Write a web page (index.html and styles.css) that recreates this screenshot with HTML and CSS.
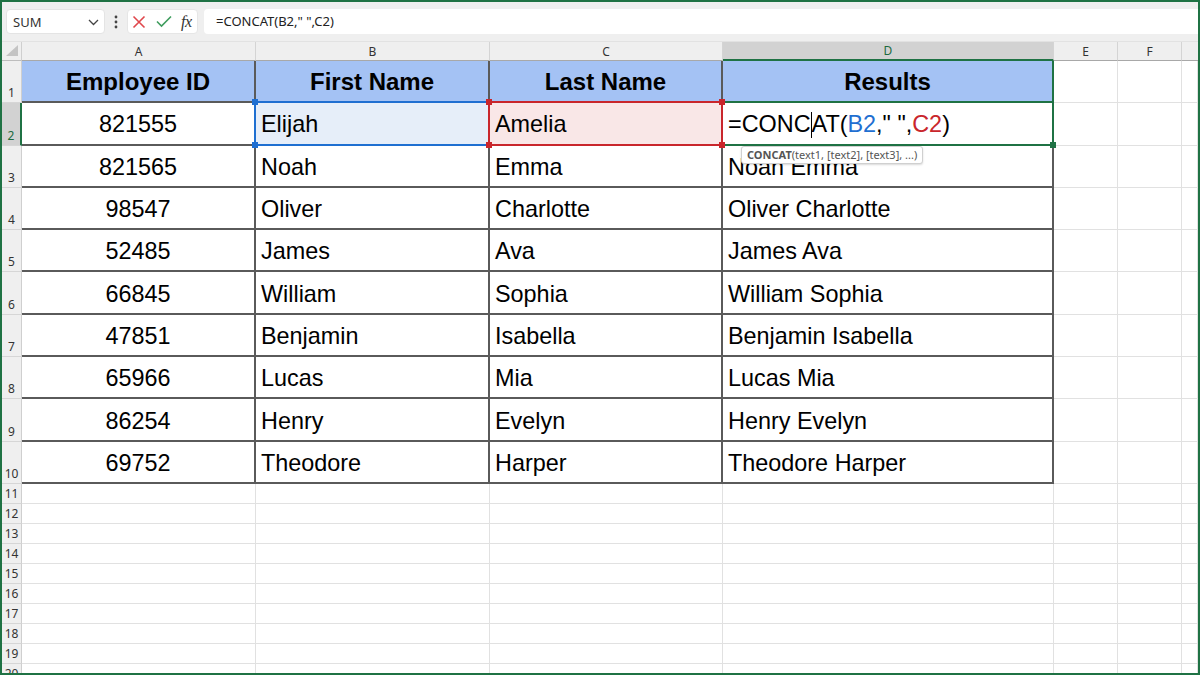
FILE: index.html
```html
<!DOCTYPE html>
<html lang="en">
<head>
<meta charset="utf-8">
<title>CONCAT</title>
<link rel="stylesheet" href="styles.css">
</head>
<body>
<div class="window">
  <div class="formula-bar">
    <div class="name-box">
      <span>SUM</span>
      <svg class="chev" width="11" height="7" viewBox="0 0 11 7"><path d="M1 1 L5.5 5.5 L10 1" fill="none" stroke="#444" stroke-width="1.3"/></svg>
    </div>
    <div class="kebab">
      <svg width="4" height="14" viewBox="0 0 4 14"><circle cx="2" cy="2" r="1.4" fill="#444"/><circle cx="2" cy="7" r="1.4" fill="#444"/><circle cx="2" cy="12" r="1.4" fill="#444"/></svg>
    </div>
    <div class="fx-box">
      <svg class="ico-x" width="14" height="14" viewBox="0 0 14 14"><path d="M1.5 1.5 L12.5 12.5 M12.5 1.5 L1.5 12.5" stroke="#e0474c" stroke-width="1.6" fill="none"/></svg>
      <svg class="ico-ok" width="16" height="13" viewBox="0 0 16 13"><path d="M1 6.5 L5.5 11 L15 1.5" stroke="#3f9d5e" stroke-width="1.6" fill="none"/></svg>
      <span class="fx">fx</span>
    </div>
    <div class="formula-input">=CONCAT(B2," ",C2)</div>
  </div>

  <div class="sheet">
    <div class="row head">
      <div class="corner"><svg width="14" height="12" viewBox="0 0 14 12"><path d="M13 0 L13 11 L1 11 Z" fill="#c4c4c4"/></svg></div>
      <div class="ch">A</div>
      <div class="ch">B</div>
      <div class="ch">C</div>
      <div class="ch sel">D</div>
      <div class="ch">E</div>
      <div class="ch">F</div>
      <div class="ch last"></div>
    </div>

    <div class="row data">
      <div class="rh">1</div>
      <div class="t hd">Employee ID</div>
      <div class="t hd">First Name</div>
      <div class="t hd">Last Name</div>
      <div class="t hd d1">Results</div>
      <div class="g"></div><div class="g"></div><div class="g"></div>
    </div>

    <div class="row data">
      <div class="rh on">2</div>
      <div class="t num">821555</div>
      <div class="t ref-b">Elijah<span class="sel-box blue"><i class="h tl"></i><i class="h tr"></i><i class="h bl"></i><i class="h br"></i></span></div>
      <div class="t ref-c">Amelia<span class="sel-box red"><i class="h tl"></i><i class="h tr"></i><i class="h bl"></i><i class="h br"></i></span></div>
      <div class="t edit">=CONC<span class="caret"></span>AT(<span class="rb">B2</span>," ",<span class="rc">C2</span>)<span class="sel-box green"><i class="h br"></i></span><span class="tip"><b>CONCAT</b>(text1, [text2], [text3], ...)</span></div>
      <div class="g"></div><div class="g"></div><div class="g"></div>
    </div>

    <div class="row data">
      <div class="rh">3</div>
      <div class="t num">821565</div><div class="t">Noah</div><div class="t">Emma</div><div class="t">Noah Emma</div>
      <div class="g"></div><div class="g"></div><div class="g"></div>
    </div>
    <div class="row data">
      <div class="rh">4</div>
      <div class="t num">98547</div><div class="t">Oliver</div><div class="t">Charlotte</div><div class="t">Oliver Charlotte</div>
      <div class="g"></div><div class="g"></div><div class="g"></div>
    </div>
    <div class="row data">
      <div class="rh">5</div>
      <div class="t num">52485</div><div class="t">James</div><div class="t">Ava</div><div class="t">James Ava</div>
      <div class="g"></div><div class="g"></div><div class="g"></div>
    </div>
    <div class="row data">
      <div class="rh">6</div>
      <div class="t num">66845</div><div class="t">William</div><div class="t">Sophia</div><div class="t">William Sophia</div>
      <div class="g"></div><div class="g"></div><div class="g"></div>
    </div>
    <div class="row data">
      <div class="rh">7</div>
      <div class="t num">47851</div><div class="t">Benjamin</div><div class="t">Isabella</div><div class="t">Benjamin Isabella</div>
      <div class="g"></div><div class="g"></div><div class="g"></div>
    </div>
    <div class="row data">
      <div class="rh">8</div>
      <div class="t num">65966</div><div class="t">Lucas</div><div class="t">Mia</div><div class="t">Lucas Mia</div>
      <div class="g"></div><div class="g"></div><div class="g"></div>
    </div>
    <div class="row data">
      <div class="rh">9</div>
      <div class="t num">86254</div><div class="t">Henry</div><div class="t">Evelyn</div><div class="t">Henry Evelyn</div>
      <div class="g"></div><div class="g"></div><div class="g"></div>
    </div>
    <div class="row data">
      <div class="rh">10</div>
      <div class="t num">69752</div><div class="t">Theodore</div><div class="t">Harper</div><div class="t">Theodore Harper</div>
      <div class="g"></div><div class="g"></div><div class="g"></div>
    </div>

    <div class="row empty"><div class="rh">11</div><div class="g"></div><div class="g"></div><div class="g"></div><div class="g"></div><div class="g"></div><div class="g"></div><div class="g"></div></div>
    <div class="row empty"><div class="rh">12</div><div class="g"></div><div class="g"></div><div class="g"></div><div class="g"></div><div class="g"></div><div class="g"></div><div class="g"></div></div>
    <div class="row empty"><div class="rh">13</div><div class="g"></div><div class="g"></div><div class="g"></div><div class="g"></div><div class="g"></div><div class="g"></div><div class="g"></div></div>
    <div class="row empty"><div class="rh">14</div><div class="g"></div><div class="g"></div><div class="g"></div><div class="g"></div><div class="g"></div><div class="g"></div><div class="g"></div></div>
    <div class="row empty"><div class="rh">15</div><div class="g"></div><div class="g"></div><div class="g"></div><div class="g"></div><div class="g"></div><div class="g"></div><div class="g"></div></div>
    <div class="row empty"><div class="rh">16</div><div class="g"></div><div class="g"></div><div class="g"></div><div class="g"></div><div class="g"></div><div class="g"></div><div class="g"></div></div>
    <div class="row empty"><div class="rh">17</div><div class="g"></div><div class="g"></div><div class="g"></div><div class="g"></div><div class="g"></div><div class="g"></div><div class="g"></div></div>
    <div class="row empty"><div class="rh">18</div><div class="g"></div><div class="g"></div><div class="g"></div><div class="g"></div><div class="g"></div><div class="g"></div><div class="g"></div></div>
    <div class="row empty"><div class="rh">19</div><div class="g"></div><div class="g"></div><div class="g"></div><div class="g"></div><div class="g"></div><div class="g"></div><div class="g"></div></div>
    <div class="row empty"><div class="rh">20</div><div class="g"></div><div class="g"></div><div class="g"></div><div class="g"></div><div class="g"></div><div class="g"></div><div class="g"></div></div>
  </div>
</div>
</body>
</html>
```

FILE: styles.css
```css
body {
  margin: 0;
  background: #fff;
}

.window {
  width: 1200px;
  height: 675px;
  box-sizing: border-box;
  border: 2px solid #1f7244;
  overflow: hidden;
  background: #fff;
  font-family: "Segoe UI", "Noto Sans", "Liberation Sans", sans-serif;
}

/* ---------- formula bar ---------- */
.formula-bar {
  height: 40px;
  box-sizing: border-box;
  background: #efefef;
  border-bottom: 1px solid #e2e2e2;
  display: flex;
  align-items: flex-start;
  padding: 7px 0 0 4px;
}

.name-box {
  width: 99px;
  height: 25px;
  box-sizing: border-box;
  background: #fff;
  border: 1px solid #e4e4e4;
  border-radius: 4px;
  display: flex;
  align-items: center;
  justify-content: space-between;
  padding: 0 5px 0 6px;
  font-size: 13px;
  color: #333;
}

.chev { margin-top: 1px; }

.kebab {
  width: 22px;
  height: 25px;
  display: flex;
  align-items: center;
  justify-content: center;
}

.fx-box {
  width: 71px;
  height: 25px;
  box-sizing: border-box;
  background: #fff;
  border: 1px solid #e6e6e6;
  border-radius: 4px;
  display: flex;
  align-items: center;
  padding-left: 4px;
}

.ico-x { margin-right: 10px; }
.ico-ok { margin-right: 9px; }

.fx {
  font-family: "Liberation Serif", "DejaVu Serif", serif;
  font-style: italic;
  font-size: 16px;
  color: #333;
  letter-spacing: -0.5px;
}

.formula-input {
  flex: 1;
  height: 25px;
  margin-left: 6px;
  box-sizing: border-box;
  background: #fff;
  border-radius: 4px 0 0 4px;
  padding-left: 12px;
  font-size: 13px;
  line-height: 25px;
  color: #222;
}

/* ---------- sheet ---------- */
.row {
  display: grid;
  grid-template-columns: 20px 234px 234px 233px 331px 64px 64px 1fr;
}

.row > div { box-sizing: border-box; }

.row.head { height: 19px; }
.row.data { height: 42.3px; }
.row.empty { height: 20px; }

.corner {
  background: #efefef;
  border-right: 1px solid #cfcfcf;
  border-bottom: 1px solid #bdbdbd;
  display: flex;
  align-items: flex-end;
  justify-content: flex-end;
  padding: 0 2px 3px 0;
}

.ch {
  background: #efefef;
  border-right: 1px solid #d4d4d4;
  border-bottom: 1px solid #a8a8a8;
  font-size: 12px;
  color: #333;
  display: flex;
  align-items: center;
  justify-content: center;
}

.ch.sel {
  background: #d2d2d2;
  color: #1c6a3d;
  border-bottom: 2px solid #1f7244;
}

.ch.last { border-right: none; }

.rh {
  background: #efefef;
  border-right: 1px solid #cfcfcf;
  border-bottom: 1px solid #d6d6d6;
  font-size: 12px;
  color: #333;
  display: flex;
  align-items: flex-end;
  justify-content: center;
  padding-bottom: 1px;
}

.row.empty .rh {
  align-items: center;
  padding-bottom: 0;
}

.rh.on {
  background: #d2d2d2;
  color: #1c6a3d;
  border-right: 2px solid #1f7244;
}

.g {
  border-right: 1px solid #e1e1e1;
  border-bottom: 1px solid #e1e1e1;
}

.t {
  position: relative;
  border-right: 2px solid #5a5a5a;
  border-bottom: 2px solid #5a5a5a;
  font-family: "Liberation Sans", Arial, sans-serif;
  font-size: 23.4px;
  color: #000;
  display: flex;
  align-items: center;
  padding: 3px 0 0 5px;
  white-space: nowrap;
}

.t.num {
  justify-content: center;
  padding-left: 0;
}

.t.hd {
  background: #a4c2f4;
  font-weight: bold;
  font-size: 24px;
  justify-content: center;
  padding-left: 0;
  padding-top: 2px;
}

.t.d1 {
  border-right-color: #1f7244;
  border-bottom-color: #1f7244;
}

.ref-b { background: #e6eef9; }
.ref-c { background: #f9e7e7; }

.rb { color: #1f6fd1; }
.rc { color: #c9262c; }

.caret {
  display: inline-block;
  width: 0;
  height: 26px;
  border-left: 1px solid #000;
}

/* selection overlays */
.sel-box {
  position: absolute;
  top: -2px;
  left: -2px;
  right: -2px;
  bottom: -2px;
  border: 2px solid;
  pointer-events: none;
}

.sel-box.blue { border-color: #1f6fd1; z-index: 2; }
.sel-box.red { border-color: #c9262c; z-index: 3; }
.sel-box.green { border-color: #1f7244; z-index: 1; }

.h {
  position: absolute;
  width: 6px;
  height: 6px;
}

.blue .h { background: #1f6fd1; }
.red .h { background: #c9262c; }
.green .h { background: #1f7244; }

.h.tl { top: -4px; left: -4px; }
.h.tr { top: -4px; right: -4px; }
.h.bl { bottom: -4px; left: -4px; }
.h.br { bottom: -4px; right: -4px; }

.tip {
  position: absolute;
  top: calc(100% + 2px);
  left: 18px;
  z-index: 5;
  background: #fff;
  border: 1px solid #d0d0d0;
  border-radius: 3px;
  box-shadow: 0 1px 2px rgba(0, 0, 0, 0.15);
  padding: 0 5px;
  height: 18px;
  line-height: 16px;
  box-sizing: border-box;
  font-family: "Segoe UI", "Noto Sans", "Liberation Sans", sans-serif;
  font-size: 11px;
  color: #555;
}

.tip b { font-weight: bold; color: #555; }
```
